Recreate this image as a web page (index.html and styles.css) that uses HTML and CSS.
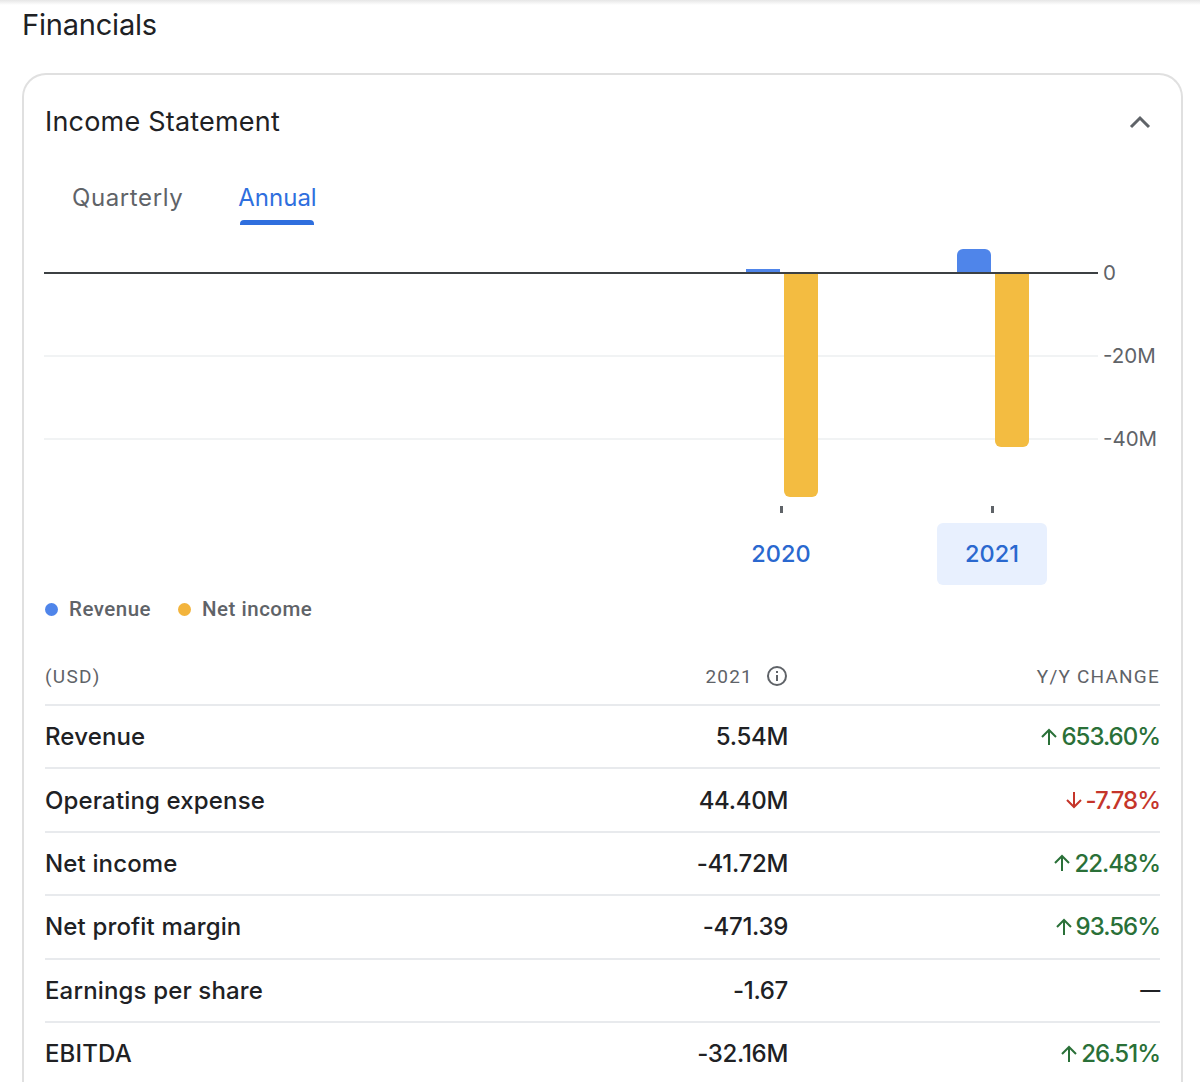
FILE: index.html
```html
<!DOCTYPE html>
<html lang="en">

<head>
    <meta charset="UTF-8">
    <meta name="viewport" content="width=device-width, initial-scale=1.0">
    <title>Financials</title>
    <link rel="stylesheet" href="styles.css">
</head>

<body>
    <div class="top-shadow"></div>
    <h1>Financials</h1>

    <section class="card">
        <header class="card-head">
            <h2>Income Statement</h2>
            <svg class="chevron" width="24" height="16" viewBox="0 0 24 16">
                <polyline points="3,14 12,5 21,14"></polyline>
            </svg>
        </header>

        <div class="tabs">
            <span class="tab">Quarterly</span>
            <span class="tab active">Annual</span>
        </div>

        <!-- Chart: coordinates are relative to the card's content box -->
        <svg class="chart" width="1116" height="352" viewBox="0 0 1116 352">
            <line class="grid" x1="0" y1="119" x2="1054" y2="119"></line>
            <line class="grid" x1="0" y1="202" x2="1054" y2="202"></line>

            <rect class="revenue" x="702" y="32" width="34" height="4"></rect>
            <path class="income" d="M740 36h34v218a6 6 0 0 1-6 6h-22a6 6 0 0 1-6-6z"></path>
            <path class="revenue" d="M913 36v-18a6 6 0 0 1 6-6h22a6 6 0 0 1 6 6v18z"></path>
            <path class="income" d="M951 36h34v168a6 6 0 0 1-6 6h-22a6 6 0 0 1-6-6z"></path>

            <line class="zero" x1="0" y1="36" x2="1054" y2="36"></line>

            <text class="axis" x="1059" y="43">0</text>
            <text class="axis" x="1059" y="126">-20M</text>
            <text class="axis" x="1059" y="209">-40M</text>

            <rect class="tick" x="736" y="269" width="3" height="7"></rect>
            <rect class="tick" x="947" y="269" width="3" height="7"></rect>

            <rect class="year-box" x="893" y="286" width="110" height="62" rx="6"></rect>
            <text class="year" x="737" y="325">2020</text>
            <text class="year" x="948" y="325">2021</text>
        </svg>

        <div class="legend">
            <span class="legend-item"><i class="dot dot-revenue"></i>Revenue</span>
            <span class="legend-item"><i class="dot dot-income"></i>Net income</span>
        </div>

        <div class="table">
            <div class="row head">
                <span>(USD)</span>
                <span class="val year-cell">2021
                    <svg width="22" height="22" viewBox="0 0 22 22">
                        <circle cx="11" cy="11" r="9"></circle>
                        <line x1="11" y1="10" x2="11" y2="16"></line>
                        <line x1="11" y1="6" x2="11" y2="8"></line>
                    </svg>
                </span>
                <span class="val">Y/Y CHANGE</span>
            </div>
            <div class="row">
                <span class="label">Revenue</span>
                <span class="val">5.54M</span>
                <span class="val change up"><svg class="arrow" width="18" height="18" viewBox="0 0 18 18"><path d="M9 17V2M2 9l7-7 7 7"></path></svg>653.60%</span>
            </div>
            <div class="row">
                <span class="label">Operating expense</span>
                <span class="val">44.40M</span>
                <span class="val change down"><svg class="arrow" width="18" height="18" viewBox="0 0 18 18"><path d="M9 1v15M2 9l7 7 7-7"></path></svg>-7.78%</span>
            </div>
            <div class="row">
                <span class="label">Net income</span>
                <span class="val">-41.72M</span>
                <span class="val change up"><svg class="arrow" width="18" height="18" viewBox="0 0 18 18"><path d="M9 17V2M2 9l7-7 7 7"></path></svg>22.48%</span>
            </div>
            <div class="row">
                <span class="label">Net profit margin</span>
                <span class="val">-471.39</span>
                <span class="val change up"><svg class="arrow" width="18" height="18" viewBox="0 0 18 18"><path d="M9 17V2M2 9l7-7 7 7"></path></svg>93.56%</span>
            </div>
            <div class="row">
                <span class="label">Earnings per share</span>
                <span class="val">-1.67</span>
                <span class="val dash">—</span>
            </div>
            <div class="row">
                <span class="label">EBITDA</span>
                <span class="val">-32.16M</span>
                <span class="val change up"><svg class="arrow" width="18" height="18" viewBox="0 0 18 18"><path d="M9 17V2M2 9l7-7 7 7"></path></svg>26.51%</span>
            </div>
        </div>
    </section>
</body>

</html>
```

FILE: styles.css
```css
* {
    margin: 0;
    padding: 0;
    box-sizing: border-box;
}

html,
body {
    height: 1082px;
    overflow: hidden;
}

body {
    background-color: white;
    color: #202124;
    font-family: Inter, Roboto, sans-serif;
}

.top-shadow {
    height: 5px;
    background: linear-gradient(#e6e6e6, white);
}

h1 {
    margin: 0 0 26px 22px;
    height: 42px;
    font-size: 29px;
    line-height: 40px;
    font-weight: 400;
    letter-spacing: -0.2px;
}

.card {
    width: 1161px;
    height: 1009px;
    margin-left: 22px;
    padding: 0 21px 0 20px;
    border: 2px solid #e0e0e0;
    border-bottom: none;
    border-radius: 24px 24px 0 0;
}

.card-head {
    display: flex;
    justify-content: space-between;
    align-items: center;
    height: 92px;
    padding-left: 1px;
}

h2 {
    font-size: 27px;
    font-weight: 400;
    letter-spacing: 0.2px;
}

.chevron {
    margin-right: 8px;
}

.chevron polyline {
    fill: none;
    stroke: #5f6368;
    stroke-width: 3;
}

.tabs {
    display: flex;
    gap: 55px;
    height: 70px;
    padding: 16px 0 0 28px;
    font-size: 24px;
    letter-spacing: 0.6px;
    color: #5f6368;
}

.tab {
    position: relative;
}

.tab.active {
    letter-spacing: 0;
    color: #2f6fde;
}

/* underline sits over the tab bar */
.tab.active::after {
    content: "";
    position: absolute;
    left: 2px;
    right: 3px;
    top: 37px;
    height: 5px;
    background-color: #2f6fde;
    border-radius: 4px 4px 0 0;
}

.chart {
    display: block;
}

.grid {
    stroke: #f1f3f4;
    stroke-width: 2;
}

.zero {
    stroke: #3c4043;
    stroke-width: 2;
}

.revenue {
    fill: #4f85ea;
}

.income {
    fill: #f3bc41;
}

.axis {
    font-family: Inter, Roboto, sans-serif;
    font-size: 20.5px;
    fill: #5f6368;
}

.tick {
    fill: #5f6368;
}

.year-box {
    fill: #e8f0fe;
}

.year {
    font-family: Inter, Roboto, sans-serif;
    font-size: 23.5px;
    font-weight: 450;
    fill: #2a68cf;
    text-anchor: middle;
}

.legend {
    display: flex;
    gap: 27px;
    height: 40px;
    padding-left: 1px;
    font-family: Roboto, sans-serif;
    font-size: 20.5px;
    font-weight: 500;
    letter-spacing: 0.5px;
    color: #5f6368;
}

.legend-item {
    display: flex;
    align-items: center;
    gap: 11px;
}

.dot {
    width: 13px;
    height: 13px;
    border-radius: 50%;
}

.dot-revenue {
    background-color: #4f85ea;
}

.dot-income {
    background-color: #f3b43c;
}

.table {
    margin-top: 19px;
    padding-left: 1px;
}

.row {
    display: grid;
    grid-template-columns: 1fr 200px 372px;
    align-items: center;
    height: 63.4px;
    border-top: 2px solid #e8eaed;
    font-size: 24px;
    font-weight: 450;
}

.row.head {
    height: 56px;
    border-top: none;
    font-family: Roboto, sans-serif;
    font-size: 19px;
    letter-spacing: 1.3px;
    color: #5f6368;
}

.label {
    letter-spacing: 0.15px;
}

.val {
    display: flex;
    justify-content: flex-end;
    align-items: center;
    letter-spacing: -0.3px;
}

.head .val {
    letter-spacing: 1.2px;
}

.dash {
    font-size: 20px;
    font-weight: 500;
}

.year-cell svg {
    margin-left: 13px;
}

.year-cell circle,
.year-cell line {
    fill: none;
    stroke: #5f6368;
    stroke-width: 2;
}

.val.change {
    letter-spacing: -1px;
}

.arrow {
    margin-right: 3px;
    fill: none;
    stroke: currentColor;
    stroke-width: 2;
}

.up {
    color: #2a7038;
}

.down {
    color: #c5352a;
}
```
